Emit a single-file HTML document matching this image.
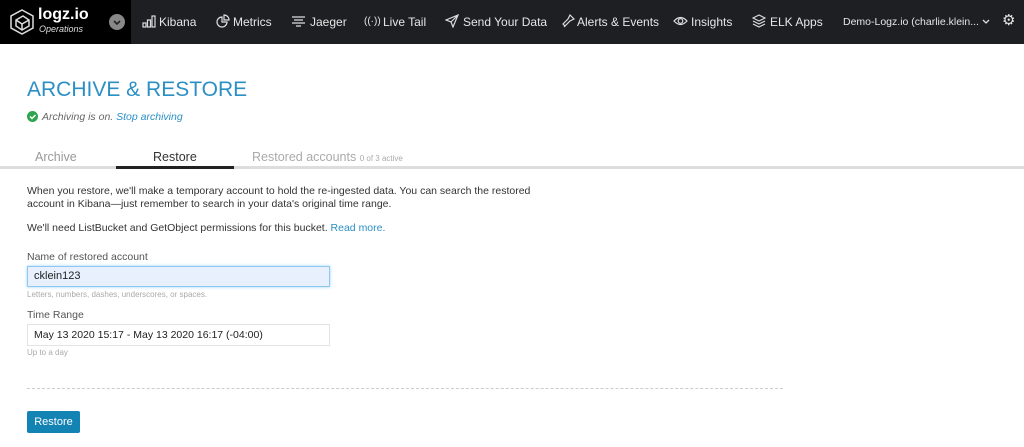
<!DOCTYPE html>
<html><head><style>
*{margin:0;padding:0;box-sizing:border-box}
body{width:1024px;height:447px;background:#fff;font-family:"Liberation Sans",sans-serif;position:relative;overflow:hidden;color:#333}
.nav{position:absolute;top:0;left:0;width:1024px;height:44px;background:#1e1f23}
.logo{position:absolute;left:0;top:0;width:131px;height:44px;background:#000}
.ni{position:absolute;top:15px;color:#e6e6e6;font-size:12px;white-space:nowrap}
.ic{position:absolute;top:14px}
.abs{position:absolute;white-space:nowrap}
.tabline{position:absolute;top:166px;left:0;width:1024px;height:3px;background:#ddd}
</style></head><body>
<div class="nav">
 <div class="logo">
  <svg style="position:absolute;left:8px;top:8px" width="28" height="28" viewBox="0 0 28 28" fill="none" stroke="#ddd" stroke-width="1.5"><path d="M14 2 L25 8 L25 20 L14 26 L3 20 L3 8 Z"/><path d="M8 12 L15 8 L21 12 L21 18 L14 22 L8 18 Z M8 12 L14 16 L21 12 M14 16 L14 22"/></svg>
  <div class="abs" style="left:38px;top:6px;color:#fff;font-weight:bold;font-size:16px">logz.io</div>
  <div class="abs" style="left:39px;top:24px;color:#ddd;font-style:italic;font-size:9px">Operations</div>
 </div>
 <svg style="position:absolute;left:109px;top:14px" width="16" height="16"><circle cx="8" cy="8" r="8" fill="#888"/><path d="M5 7 L8 10 L11 7" stroke="#222" stroke-width="1.6" fill="none"/></svg>
 <svg class="ic" style="left:142px" width="14" height="14" fill="none" stroke="#ddd" stroke-width="1.2"><rect x="1" y="9" width="3" height="4"/><rect x="5.5" y="6" width="3" height="7"/><rect x="10" y="2" width="3" height="11"/></svg>
 <div class="ni" style="left:159px">Kibana</div>
 <svg class="ic" style="left:216px" width="14" height="14" fill="none" stroke="#ddd" stroke-width="1.2"><path d="M6 3 A5 5 0 1 0 11 8 L6 8 Z"/><path d="M8 1 L8 6 L13 6 A5 5 0 0 0 8 1Z"/></svg>
 <div class="ni" style="left:233px">Metrics</div>
 <svg class="ic" style="left:291px" width="15" height="14" stroke="#ddd" stroke-width="1.2"><path d="M1 3H14M3 6H12M1 9H14M5 12H10"/></svg>
 <div class="ni" style="left:310px">Jaeger</div>
 <div class="ni" style="left:364px;font-size:10px;top:16px">((·))</div>
 <div class="ni" style="left:383px">Live Tail</div>
 <svg class="ic" style="left:445px" width="14" height="14" fill="none" stroke="#ddd" stroke-width="1.2"><path d="M13 1 L1 6 L6 8 L8 13 Z M6 8 L13 1"/></svg>
 <div class="ni" style="left:463px">Send Your Data</div>
 <svg class="ic" style="left:561px" width="14" height="14" fill="none" stroke="#ddd" stroke-width="1.2"><path d="M9 1 L13 5 L9 7 L4 12 L2 10 L7 5 Z M4 12 L3 13"/></svg>
 <div class="ni" style="left:577px">Alerts &amp; Events</div>
 <svg class="ic" style="left:673px" width="15" height="14" fill="none" stroke="#ddd" stroke-width="1.2"><path d="M1 7 Q7.5 0 14 7 Q7.5 14 1 7Z"/><circle cx="7.5" cy="7" r="2.3"/></svg>
 <div class="ni" style="left:691px">Insights</div>
 <svg class="ic" style="left:752px" width="14" height="14" fill="none" stroke="#ddd" stroke-width="1.2"><path d="M7 1 L13 4 L7 7 L1 4 Z M1 7 L7 10 L13 7 M1 10 L7 13 L13 10"/></svg>
 <div class="ni" style="left:770px">ELK Apps</div>
 <div class="ni" style="left:843px;font-size:10.5px;top:16px">Demo-Logz.io (charlie.klein...</div>
 <svg style="position:absolute;left:982px;top:19px" width="8" height="6"><path d="M1 1 L4 4 L7 1" stroke="#ddd" stroke-width="1.3" fill="none"/></svg>
 <div class="ni" style="left:1002px;font-size:15px;top:11px">&#9881;</div>
</div>
<div class="abs" style="left:27px;top:78px;font-size:21px;color:#2b8fc4">ARCHIVE &amp; RESTORE</div>
<svg style="position:absolute;left:27px;top:111px" width="11" height="11"><circle cx="5.5" cy="5.5" r="5.5" fill="#2ea44f"/><path d="M3 5.5 L5 7.5 L8.5 4" stroke="#fff" stroke-width="1.5" fill="none"/></svg>
<div class="abs" style="left:42px;top:111px;font-size:10.5px;font-style:italic;color:#666">Archiving is on. <span style="color:#2b8fc4">Stop archiving</span></div>
<div class="abs" style="left:35px;top:150px;font-size:12.5px;color:#999">Archive</div>
<div class="abs" style="left:153px;top:150px;font-size:12.5px;color:#333">Restore</div>
<div class="abs" style="left:252px;top:150px;font-size:12.5px;color:#aaa">Restored accounts <span style="font-size:8px">0 of 3 active</span></div>
<div class="tabline"></div>
<div style="position:absolute;left:116px;top:166px;width:118px;height:3px;background:#222"></div>
<div class="abs" style="left:27px;top:185px;font-size:10.5px;line-height:13px;color:#333;white-space:normal;width:520px">When you restore, we'll make a temporary account to hold the re-ingested data. You can search the restored account in Kibana—just remember to search in your data's original time range.</div>
<div class="abs" style="left:27px;top:222px;font-size:10.5px;color:#333">We'll need ListBucket and GetObject permissions for this bucket. <span style="color:#2b8fc4">Read more.</span></div>
<div class="abs" style="left:27px;top:251px;font-size:10.5px;color:#555">Name of restored account</div>
<div style="position:absolute;left:27px;top:266px;width:303px;height:21px;background:#e8f0fe;border:1px solid #8cc8ef;box-shadow:0 0 3px #9cd4f5"></div>
<div class="abs" style="left:34px;top:270px;font-size:11px;color:#222">cklein123</div>
<div class="abs" style="left:27px;top:290px;font-size:8px;color:#aaa">Letters, numbers, dashes, underscores, or spaces.</div>
<div class="abs" style="left:27px;top:309px;font-size:10.5px;color:#555">Time Range</div>
<div style="position:absolute;left:27px;top:324px;width:303px;height:22px;border:1px solid #e3e3e3"></div>
<div class="abs" style="left:34px;top:329px;font-size:10.5px;color:#222">May 13 2020 15:17 - May 13 2020 16:17 (-04:00)</div>
<div class="abs" style="left:27px;top:348px;font-size:8px;color:#aaa">Up to a day</div>
<div style="position:absolute;left:27px;top:388px;width:756px;border-top:1px dashed #ccc"></div>
<div style="position:absolute;left:27px;top:411px;width:53px;height:22px;background:#1283b3;border-radius:2px;color:#fff;font-size:11px;text-align:center;line-height:22px">Restore</div>
</body></html>
